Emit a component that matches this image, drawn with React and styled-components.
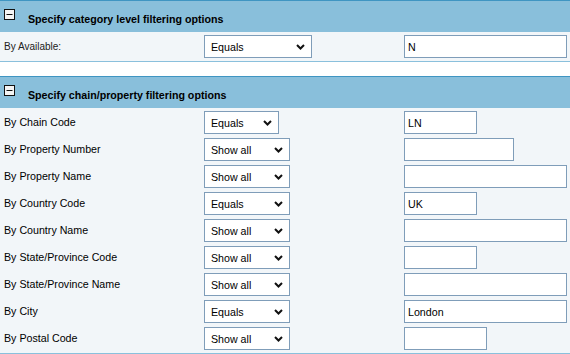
import React from 'react';
import styled, { createGlobalStyle } from 'styled-components';

const GlobalStyle = createGlobalStyle`
    body {
        margin: 0;
        background: #ffffff;
        font-family: "Liberation Sans", Arial, sans-serif;
    }
`

const categoryRows = [
    { label: 'By Available:', op: 'Equals', selectWidth: 108, value: 'N', inputWidth: 163, small: true },
]

const chainRows = [
    { label: 'By Chain Code', op: 'Equals', selectWidth: 75, value: 'LN', inputWidth: 73 },
    { label: 'By Property Number', op: 'Show all', selectWidth: 86, value: '', inputWidth: 110 },
    { label: 'By Property Name', op: 'Show all', selectWidth: 86, value: '', inputWidth: 163 },
    { label: 'By Country Code', op: 'Equals', selectWidth: 86, value: 'UK', inputWidth: 73 },
    { label: 'By Country Name', op: 'Show all', selectWidth: 86, value: '', inputWidth: 163 },
    { label: 'By State/Province Code', op: 'Show all', selectWidth: 86, value: '', inputWidth: 73 },
    { label: 'By State/Province Name', op: 'Show all', selectWidth: 86, value: '', inputWidth: 163 },
    { label: 'By City', op: 'Equals', selectWidth: 86, value: 'London', inputWidth: 163 },
    { label: 'By Postal Code', op: 'Show all', selectWidth: 86, value: '', inputWidth: 83 },
]

const ToggleIcon = () => (
    <IconBox width="11" height="11" viewBox="0 0 11 11">
        <rect x="0.5" y="0.5" width="10" height="10" fill="#f4f4f4" stroke="#111" />
        <line x1="2.5" y1="5.5" x2="8.5" y2="5.5" stroke="#111" strokeWidth="1" />
    </IconBox>
)

const FilterRow = ({ row }) => (
    <Row>
        <Label $small={row.small}>{row.label}</Label>
        <SelectWrap $width={row.selectWidth}>
            <Select defaultValue={row.op}>
                <option>Show all</option>
                <option>Equals</option>
                <option>Starts with</option>
            </Select>
            <Chevron width="9" height="6" viewBox="0 0 9 6">
                <polyline points="1,1 4.5,4.5 8,1" fill="none" stroke="#111" strokeWidth="2" />
            </Chevron>
        </SelectWrap>
        <TextInput type="text" defaultValue={row.value} $width={row.inputWidth} />
    </Row>
)

const App = () => {
    return (<Page>
        <GlobalStyle />
        <Section>
            <Header>
                <ToggleIcon />
                <Title>Specify category level filtering options</Title>
            </Header>
            <Body>
                {categoryRows.map(r => <FilterRow key={r.label} row={r} />)}
            </Body>
        </Section>
        <Section $edge>
            <Header>
                <ToggleIcon />
                <Title>Specify chain/property filtering options</Title>
            </Header>
            <Body>
                {chainRows.map(r => <FilterRow key={r.label} row={r} />)}
            </Body>
        </Section>
    </Page>);
}

export default App;

const Page = styled.div`
    width: 570px;
    display: flex;
    flex-direction: column;
    gap: 14px;
`

const Section = styled.div`
    display: flex;
    flex-direction: column;
    box-shadow: ${p => p.$edge ? 'inset 1px 0 0 #8ac0dc' : 'none'};
`

const Header = styled.div`
    height: 31px;
    border-top: 1px solid #3f95c2;
    background: #89bfdb;
    display: flex;
    align-items: flex-start;
    padding-left: 4px;
    gap: 13px;
`

const IconBox = styled.svg`
    display: block;
    margin-top: 8px;
    flex: none;
`

const Title = styled.span`
    font-size: 8pt;
    font-weight: bold;
    color: #000;
    line-height: 13px;
    margin-top: 12px;
`

const Body = styled.div`
    background: #f2f6f9;
    padding-bottom: 2px;
    border-bottom: 1px solid #8ac0dc;
`

const Row = styled.div`
    height: 27px;
    box-sizing: border-box;
    padding: 3px 0 0 4px;
    display: grid;
    grid-template-columns: 200px 200px 1fr;
    align-items: start;
`

const Label = styled.span`
    font-size: ${p => p.$small ? '10px' : '8pt'};
    color: ${p => p.$small ? '#222' : '#000'};
    line-height: 23px;
    white-space: nowrap;
`

const SelectWrap = styled.div`
    position: relative;
    width: ${p => p.$width}px;
    height: 23px;
`

const Select = styled.select`
    appearance: none;
    width: 100%;
    height: 23px;
    box-sizing: border-box;
    margin: 0;
    border: 1px solid #7f9db9;
    border-radius: 0;
    background: #fff;
    padding: 0 20px 0 6px;
    font-family: "Liberation Sans", Arial, sans-serif;
    font-size: 8pt;
    color: #000;
    outline: none;
`

const Chevron = styled.svg`
    position: absolute;
    right: 7px;
    top: 9px;
    pointer-events: none;
`

const TextInput = styled.input`
    width: ${p => p.$width}px;
    height: 23px;
    box-sizing: border-box;
    margin: 0;
    border: 1px solid #7f9db9;
    border-radius: 0;
    background: #fff;
    padding: 0 3px;
    font-family: "Liberation Sans", Arial, sans-serif;
    font-size: 8pt;
    color: #000;
    outline: none;
`
